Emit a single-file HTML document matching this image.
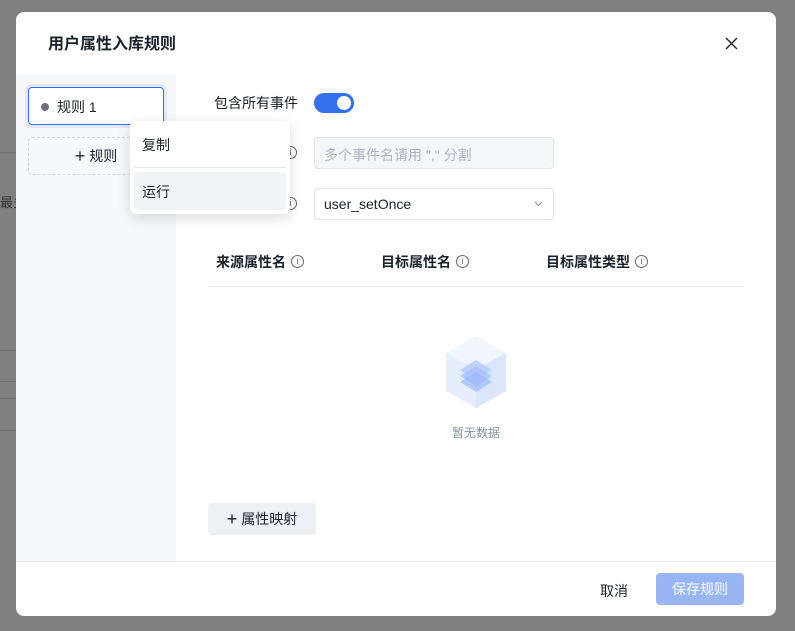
<!DOCTYPE html>
<html><head><meta charset="utf-8"><style>
*{box-sizing:border-box;margin:0;padding:0}
body{width:795px;height:631px;background:#808080;font-family:"Liberation Sans","Noto Sans CJK SC",sans-serif;position:relative;overflow:hidden;color:#1d2129}
.ln{position:absolute;left:0;width:16px;height:1px;background:#707070}
.modal{position:absolute;left:16px;top:12px;width:760px;height:604px;background:#fff;border-radius:8px;overflow:hidden}
.title{position:absolute;left:32px;top:18px;font-size:16px;font-weight:bold;color:#1d2129}
.close{position:absolute;left:709px;top:25px}
.side{position:absolute;left:0;top:62px;width:160px;height:487px;background:#f7f8fa}
.rule{position:absolute;left:12px;top:13px;width:136px;height:38px;border:1px solid #3370eb;border-radius:4px;background:#fff;box-shadow:0 0 0 3px #dfe9fc;font-size:14px;padding:9px 0 0 28px}
.rule:before{content:"";position:absolute;left:12px;top:15px;width:8px;height:8px;border-radius:50%;background:#6b7080}
.add{position:absolute;left:12px;top:63px;width:136px;height:38px;border:1px dashed #d6d8de;border-radius:4px;font-size:14px;text-align:center;line-height:36px}
.menu{position:absolute;left:114px;top:109px;width:160px;height:93px;background:#fff;border-radius:6px;box-shadow:0 4px 14px rgba(0,0,0,.14);font-size:14px;z-index:3}
.menu .a{position:absolute;left:12px;top:14px}
.menu .sep{position:absolute;left:4px;right:4px;top:46px;height:1px;background:#e5e6eb}
.menu .b{position:absolute;left:4px;right:4px;top:51px;height:38px;background:#f2f3f5;border-radius:4px;padding:10px 8px}
.lbl{position:absolute;font-size:14px}
.tog{position:absolute;left:298px;top:81px;width:40px;height:20px;border-radius:10px;background:#3370eb}
.tog:after{content:"";position:absolute;right:3px;top:3px;width:14px;height:14px;border-radius:50%;background:#fff}
.inp{position:absolute;left:298px;width:240px;height:32px;border:1px solid #e0e2e8;border-radius:4px;font-size:14px;padding:7px 9px}
.info{display:inline-block;width:13px;height:13px;border:1px solid #666;border-radius:50%;font-size:9px;line-height:11px;text-align:center;font-weight:normal;vertical-align:middle;margin-left:5px;margin-top:-3px;color:#666}
.th{position:absolute;top:240px;font-size:14px;font-weight:bold}
.hr{position:absolute;left:192px;top:274px;width:536px;height:1px;background:#e5e6eb}
.empty{position:absolute;left:436px;top:412px;font-size:12px;color:#86909c}
.btnm{position:absolute;left:192px;top:491px;width:108px;height:32px;background:#eef0f3;border-radius:4px;font-size:14px;text-align:center;line-height:32px}
.foot{position:absolute;left:0;top:549px;width:760px;height:1px;background:#e5e6eb}
.cancel{position:absolute;left:584px;top:569px;font-size:14px}
.save{position:absolute;left:640px;top:561px;width:88px;height:32px;background:#98b6f4;border-radius:4px;color:#fff;font-size:14px;text-align:center;line-height:32px}
</style></head><body>
<div class="ln" style="top:152px"></div><div class="ln" style="top:350px"></div><div class="ln" style="top:381px"></div><div class="ln" style="top:398px"></div><div class="ln" style="top:430px"></div>
<div style="position:absolute;left:0;top:192px;font-size:13px;color:#333">最多</div>
<div class="modal">
<div class="title">用户属性入库规则</div>
<svg class="close" width="13" height="13" viewBox="0 0 13 13"><path d="M1 1L12 12M12 1L1 12" stroke="#1d2129" stroke-width="1.4"/></svg>
<div class="side">
<div class="rule">规则 1</div>
<div class="add"><span style="font-size:18px;vertical-align:-1px">+</span> 规则</div>
</div>
<div class="menu"><div class="a">复制</div><div class="sep"></div><div class="b">运行</div></div>
<div class="lbl" style="left:198px;top:81px">包含所有事件</div>
<div class="tog"></div>
<div class="lbl" style="left:263px;top:133px"><span class="info">i</span></div>
<div class="inp" style="top:125px;background:#f5f6f8;color:#b0b4bc">多个事件名请用 "," 分割</div>
<div class="lbl" style="left:263px;top:184px"><span class="info">i</span></div>
<div class="inp" style="top:176px">user_setOnce<svg style="position:absolute;right:10px;top:12px" width="9" height="6" viewBox="0 0 9 6"><path d="M1 1L4.5 4.5L8 1" stroke="#888" fill="none"/></svg></div>
<div class="th" style="left:200px">来源属性名<span class="info">i</span></div>
<div class="th" style="left:365px">目标属性名<span class="info">i</span></div>
<div class="th" style="left:530px">目标属性类型<span class="info">i</span></div>
<div class="hr"></div>
<svg style="position:absolute;left:428px;top:322px" width="64" height="76" viewBox="0 0 64 76">
<path d="M32 2L62 19V57L32 74L2 57V19Z" fill="#e6eefd"/>
<path d="M32 2L62 19L32 36L2 19Z" fill="#f0f5fe"/>
<path d="M32 36L62 19V57L32 74Z" fill="#dbe6fc"/>
<path d="M32 26L48 36L32 46L16 36Z" fill="#bcd0fb"/>
<path d="M32 32L48 42L32 52L16 42Z" fill="#a9c3fa" opacity=".9"/>
<path d="M32 38L48 48L32 58L16 48Z" fill="#9bb9f8" opacity=".7"/>
</svg>
<div class="empty">暂无数据</div>
<div class="btnm"><span style="font-size:18px;vertical-align:-1px">+</span> 属性映射</div>
<div class="foot"></div>
<div class="cancel">取消</div>
<div class="save">保存规则</div>
</div>
</body></html>
